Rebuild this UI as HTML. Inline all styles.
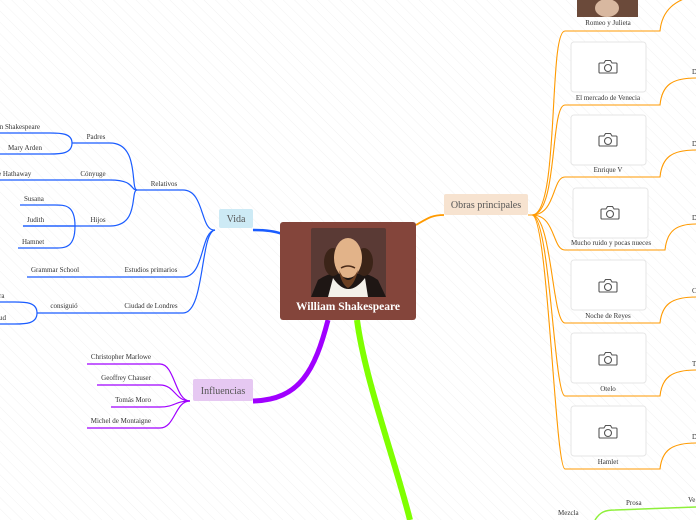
<!DOCTYPE html>
<html><head><meta charset="utf-8"><style>
html,body{margin:0;padding:0;width:696px;height:520px;overflow:hidden;background:#fff;}
svg{display:block}
text{font-family:"Liberation Serif",serif;fill:#333;font-size:7px}
</style></head><body>
<svg width="696" height="520" viewBox="0 0 696 520" xmlns="http://www.w3.org/2000/svg">
<defs>
<pattern id="dg" width="8" height="8" patternUnits="userSpaceOnUse" patternTransform="rotate(-45)">
<line x1="0" y1="0" x2="0" y2="8" stroke="#f2f2f2" stroke-width="1"/>
</pattern>
</defs>
<rect width="696" height="520" fill="url(#dg)"/>

<!-- BLUE -->
<g fill="none" stroke="#1a5cff" stroke-width="1.2">
<path d="M253 230 C265 230 275 231 282 234" stroke-width="2.5"/>
<path d="M215 230 C200 232 205 190 183 190 L137 190"/>
<path d="M215 230 C200 232 205 277 183 277 L27 277"/>
<path d="M215 230 C200 232 205 313 183 313 L37 313"/>
<path d="M137 190 C130 190 140 143 110 143 L72 143"/>
<path d="M137 190 C130 190 135 180 110 180 L0 180"/>
<path d="M137 190 C130 190 140 226 110 226 L23 226"/>
<path d="M72 143 C72 133 60 133 50 133 L0 133"/>
<path d="M72 143 C72 154 60 154 50 154 L0 154"/>
<path d="M75 226 C75 205 65 205 55 205 L20 205"/>
<path d="M75 226 L23 226"/>
<path d="M75 226 C75 248 65 248 55 248 L18 248"/>
<path d="M37 313 C37 302 25 302 15 302 L0 302"/>
<path d="M37 313 C37 324 25 324 15 324 L0 324"/>
</g>
<rect x="219" y="209" width="34" height="19" rx="2" fill="#cdeaf5"/>
<text x="236" y="222" text-anchor="middle" style="font-size:10px;fill:#555">Vida</text>
<text x="164" y="186" text-anchor="middle">Relativos</text>
<text x="96" y="139" text-anchor="middle">Padres</text>
<text x="40" y="129" text-anchor="end">n Shakespeare</text>
<text x="8" y="150">Mary Arden</text>
<text x="93" y="176" text-anchor="middle">Cónyuge</text>
<text x="-2" y="176">e Hathaway</text>
<text x="98" y="222" text-anchor="middle">Hijos</text>
<text x="24" y="201">Susana</text>
<text x="27" y="222">Judith</text>
<text x="22" y="244">Hamnet</text>
<text x="151" y="272" text-anchor="middle">Estudios primarios</text>
<text x="31" y="272">Grammar School</text>
<text x="151" y="308" text-anchor="middle">Ciudad de Londres</text>
<text x="64" y="308" text-anchor="middle">consiguió</text>
<text x="-1" y="298">ra</text>
<text x="-1" y="320">ud</text>

<!-- PURPLE -->
<path d="M328 320 C315 370 300 400 253 401" fill="none" stroke="#a000ff" stroke-width="5"/>
<g fill="none" stroke="#a000ff" stroke-width="1.2">
<path d="M190 401 C175 401 175 364 160 364 L87 364"/>
<path d="M190 401 C175 401 175 385 160 385 L97 385"/>
<path d="M190 401 C175 401 175 407 160 407 L111 407"/>
<path d="M190 401 C175 401 175 428 160 428 L87 428"/>
</g>
<rect x="193" y="379" width="60" height="22" rx="2" fill="#e6c8f2"/>
<text x="223" y="394" text-anchor="middle" style="font-size:10px;fill:#555">Influencias</text>
<text x="151" y="359" text-anchor="end">Christopher Marlowe</text>
<text x="151" y="380" text-anchor="end">Geoffrey Chauser</text>
<text x="151" y="402" text-anchor="end">Tomás Moro</text>
<text x="151" y="423" text-anchor="end">Michel de Montaigne</text>

<!-- GREEN -->
<path d="M357 320 C365 380 395 460 410 520" fill="none" stroke="#7fff00" stroke-width="6"/>
<path d="M595 520 C600 512 605 510 615 510 L696 507" fill="none" stroke="#8ef03a" stroke-width="1.5"/>
<text x="626" y="505">Prosa</text>
<text x="558" y="515">Mezcla</text>
<text x="688" y="502">Ve</text>

<!-- ORANGE -->
<path d="M416 225 C428 218 432 215 444 215" fill="none" stroke="#ff9a00" stroke-width="1.8"/>
<g fill="none" stroke="#ff9a00" stroke-width="1.1">
<path d="M528 215 L532 215 C560 215 548 31 565 31 L660 31 C662 10 675 0 696 -5"/>
<path d="M532 215 C558 215 550 105 565 105 L660 105 C662 85 672 78 696 78"/>
<path d="M532 215 C556 215 552 177 565 177 L660 177 C662 157 672 150 696 150"/>
<path d="M532 215 C556 215 552 250 565 250 L665 250 C667 231 676 224 696 224"/>
<path d="M532 215 C552 215 552 323 565 323 L660 323 C662 304 672 297 696 297"/>
<path d="M532 215 C550 215 554 396 565 396 L660 396 C662 377 672 370 696 370"/>
<path d="M532 215 C548 215 555 469 565 469 L660 469 C662 450 672 443 696 443"/>
</g>
<rect x="444" y="194" width="84" height="21" rx="2" fill="#f7e3d0"/>
<text x="486" y="208" text-anchor="middle" style="font-size:10px;fill:#555">Obras principales</text>

<!-- romeo image -->
<rect x="577" y="-2" width="61" height="19" fill="#6b4a3a"/>
<ellipse cx="607" cy="8" rx="12" ry="9" fill="#d8b8a0"/>
<text x="608" y="25" text-anchor="middle">Romeo y Julieta</text>

<g id="cams" fill="#fff" stroke="#e6e6e6" stroke-width="1">
<rect x="571" y="42" width="75" height="50" rx="3"/>
<rect x="571" y="115" width="75" height="50" rx="3"/>
<rect x="573" y="188" width="75" height="50" rx="3"/>
<rect x="571" y="260" width="75" height="50" rx="3"/>
<rect x="571" y="333" width="75" height="50" rx="3"/>
<rect x="571" y="406" width="75" height="50" rx="3"/>
</g>
<g fill="none" stroke="#555" stroke-width="1.1">
<g transform="translate(608,67)"><path d="M-8 -4 L-4 -4 L-2.5 -6.5 L2.5 -6.5 L4 -4 L8 -4 Q9 -4 9 -3 L9 5 Q9 6 8 6 L-8 6 Q-9 6 -9 5 L-9 -3 Q-9 -4 -8 -4 Z"/><circle cx="0" cy="1" r="3.5"/></g>
<g transform="translate(608,140)"><path d="M-8 -4 L-4 -4 L-2.5 -6.5 L2.5 -6.5 L4 -4 L8 -4 Q9 -4 9 -3 L9 5 Q9 6 8 6 L-8 6 Q-9 6 -9 5 L-9 -3 Q-9 -4 -8 -4 Z"/><circle cx="0" cy="1" r="3.5"/></g>
<g transform="translate(610,213)"><path d="M-8 -4 L-4 -4 L-2.5 -6.5 L2.5 -6.5 L4 -4 L8 -4 Q9 -4 9 -3 L9 5 Q9 6 8 6 L-8 6 Q-9 6 -9 5 L-9 -3 Q-9 -4 -8 -4 Z"/><circle cx="0" cy="1" r="3.5"/></g>
<g transform="translate(608,286)"><path d="M-8 -4 L-4 -4 L-2.5 -6.5 L2.5 -6.5 L4 -4 L8 -4 Q9 -4 9 -3 L9 5 Q9 6 8 6 L-8 6 Q-9 6 -9 5 L-9 -3 Q-9 -4 -8 -4 Z"/><circle cx="0" cy="1" r="3.5"/></g>
<g transform="translate(608,359)"><path d="M-8 -4 L-4 -4 L-2.5 -6.5 L2.5 -6.5 L4 -4 L8 -4 Q9 -4 9 -3 L9 5 Q9 6 8 6 L-8 6 Q-9 6 -9 5 L-9 -3 Q-9 -4 -8 -4 Z"/><circle cx="0" cy="1" r="3.5"/></g>
<g transform="translate(608,432)"><path d="M-8 -4 L-4 -4 L-2.5 -6.5 L2.5 -6.5 L4 -4 L8 -4 Q9 -4 9 -3 L9 5 Q9 6 8 6 L-8 6 Q-9 6 -9 5 L-9 -3 Q-9 -4 -8 -4 Z"/><circle cx="0" cy="1" r="3.5"/></g>
</g>
<text x="608" y="100" text-anchor="middle">El mercado de Venecia</text>
<text x="608" y="172" text-anchor="middle">Enrique V</text>
<text x="611" y="245" text-anchor="middle">Mucho ruido y pocas nueces</text>
<text x="608" y="318" text-anchor="middle">Noche de Reyes</text>
<text x="608" y="391" text-anchor="middle">Otelo</text>
<text x="608" y="464" text-anchor="middle">Hamlet</text>
<text x="692" y="74">D</text>
<text x="692" y="146">D</text>
<text x="692" y="220">D</text>
<text x="692" y="293">C</text>
<text x="692" y="366">T</text>
<text x="692" y="439">D</text>

<!-- CENTRAL -->
<rect x="280" y="222" width="136" height="98" rx="3" fill="#84453b"/>
<rect x="311" y="228" width="75" height="69" rx="2" fill="#5a3a35"/>
<g>
<path d="M311 297 L318 280 Q335 268 348 278 Q362 268 378 280 L386 297 Z" fill="#1e1614"/>
<path d="M333 278 Q348 300 365 278 L368 297 L328 297 Z" fill="#f4f1ea"/>
<ellipse cx="333" cy="262" rx="9" ry="14" fill="#3b2418"/>
<ellipse cx="364" cy="262" rx="9" ry="14" fill="#3b2418"/>
<ellipse cx="348" cy="258" rx="14" ry="20" fill="#e2b389"/>
<path d="M339 270 Q348 290 358 270 Q355 284 348 288 Q341 284 339 270 Z" fill="#6b3f22"/>
<path d="M341 268 Q348 264 355 268" stroke="#4a2a18" stroke-width="1.5" fill="none"/>
</g>
<text x="348" y="310" text-anchor="middle" style="font-size:11.5px;font-weight:bold;fill:#fff">William Shakespeare</text>
</svg>
</body></html>
